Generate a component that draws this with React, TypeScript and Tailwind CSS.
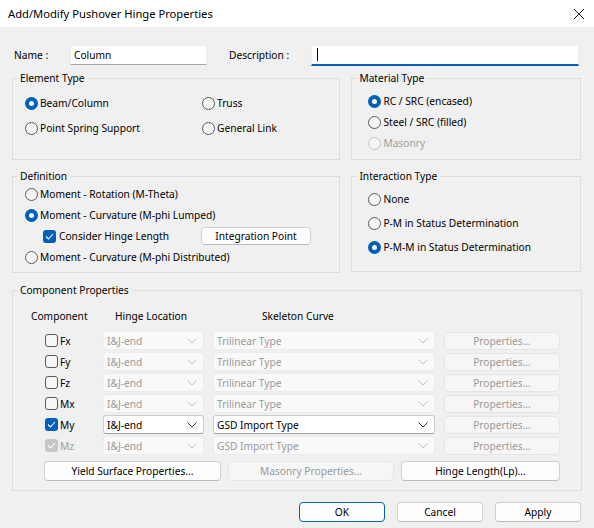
import React from "react";

const FONT = { fontFamily: '"Noto Sans", "Liberation Sans", sans-serif' };

function Radio({ label, checked, disabled }: { label: string; checked?: boolean; disabled?: boolean }) {
  return (
    <div className="flex items-center h-[16px] gap-[2px]">
      {checked ? (
        <span className="w-[13px] h-[13px] rounded-full bg-[#005fb8] flex items-center justify-center shrink-0">
          <span className="w-[5px] h-[5px] rounded-full bg-white" />
        </span>
      ) : (
        <span
          className={
            "w-[13px] h-[13px] rounded-full border shrink-0 " +
            (disabled ? "border-[#c6c6c6] bg-[#f5f5f5]" : "border-[#5a5a5a] bg-[#f6f6f6]")
          }
        />
      )}
      <span className={disabled ? "text-[#a0a0a0]" : "text-black"}>{label}</span>
    </div>
  );
}

function Check({ checked, disabled }: { checked?: boolean; disabled?: boolean }) {
  if (checked) {
    return (
      <span
        className={
          "w-[13px] h-[13px] rounded-[3px] flex items-center justify-center shrink-0 " +
          (disabled ? "bg-[#c6c6c6]" : "bg-[#005fb8]")
        }
      >
        <svg width="9" height="7" viewBox="0 0 9 7" fill="none">
          <polyline points="1,3.5 3.5,6 8,1" stroke="white" strokeWidth="1.1" />
        </svg>
      </span>
    );
  }
  return <span className="w-[13px] h-[13px] rounded-[3px] border border-[#5a5a5a] bg-[#f6f6f6] shrink-0" />;
}

function Chevron({ disabled }: { disabled?: boolean }) {
  return (
    <svg width="10" height="6" viewBox="0 0 10 6" fill="none" className="shrink-0">
      <polyline points="0.5,0.5 5,5 9.5,0.5" stroke={disabled ? "#c0c0c0" : "#333"} strokeWidth="1" />
    </svg>
  );
}

function Select({ value, w, disabled }: { value: string; w: string; disabled?: boolean }) {
  return (
    <div
      className={
        "h-[19px] flex items-center justify-between pl-[3px] pr-[6px] rounded-[3px] border shrink-0 " +
        w +
        (disabled
          ? " bg-[#f9f9f9] border-[#ececec] text-[#9a9a9a]"
          : " bg-white border-[#cccccc] border-b-[#a0a0a0] text-black")
      }
    >
      <span>{value}</span>
      <Chevron disabled={disabled} />
    </div>
  );
}

function Btn({
  label,
  w,
  h,
  disabled,
  primary,
}: {
  label: string;
  w: string;
  h: string;
  disabled?: boolean;
  primary?: boolean;
}) {
  return (
    <div
      className={
        "flex items-center justify-center rounded-[4px] border shrink-0 " +
        w +
        " " +
        h +
        (disabled
          ? " bg-[#f6f6f6] border-[#e5e5e5] text-[#9a9a9a]"
          : primary
          ? " bg-[#fdfdfd] border-[#005fb8] text-black"
          : " bg-[#fdfdfd] border-[#d0d0d0] border-b-[#bcbcbc] text-black")
      }
    >
      {label}
    </div>
  );
}

function Group({ title, className, children }: { title: string; className: string; children: React.ReactNode }) {
  return (
    <div className={"relative border border-[#dcdcdc] " + className}>
      <span className="absolute left-[4px] top-[-9px] px-[3px] bg-[#f0f0f0] leading-[16px]">{title}</span>
      {children}
    </div>
  );
}

const rows = [
  { c: "Fx", loc: "I&J-end", curve: "Trilinear Type", checked: false, enabled: false },
  { c: "Fy", loc: "I&J-end", curve: "Trilinear Type", checked: false, enabled: false },
  { c: "Fz", loc: "I&J-end", curve: "Trilinear Type", checked: false, enabled: false },
  { c: "Mx", loc: "I&J-end", curve: "Trilinear Type", checked: false, enabled: false },
  { c: "My", loc: "I&J-end", curve: "GSD Import Type", checked: true, enabled: true },
  { c: "Mz", loc: "I&J-end", curve: "GSD Import Type", checked: true, enabled: false, disabledCheck: true },
];

export default function App() {
  return (
    <div className="w-[594px] h-[528px] bg-[#f0f0f0] flex flex-col text-[10.2px] text-black leading-[16px]" style={FONT}>
      {/* Title bar */}
      <div className="h-[27px] bg-white flex items-center justify-between pl-[8px] pr-[9px] shrink-0">
        <span className="text-[11.2px]">Add/Modify Pushover Hinge Properties</span>
        <svg width="12" height="12" viewBox="0 0 12 12" fill="none">
          <line x1="1" y1="1" x2="11" y2="11" stroke="#1a1a1a" strokeWidth="1" />
          <line x1="11" y1="1" x2="1" y2="11" stroke="#1a1a1a" strokeWidth="1" />
        </svg>
      </div>

      <div className="flex flex-col pl-[12px] pr-[13px]">
        {/* Name row */}
        <div className="flex items-center h-[20px] mt-[18px]">
          <span className="ml-[2px] w-[56px]">Name :</span>
          <div className="w-[137px] h-[20px] bg-white border border-[#ececec] border-b-[#a8a8a8] flex items-center pl-[3px]">
            Column
          </div>
          <span className="ml-[22px] w-[82px]">Description :</span>
          <div className="w-[268px] h-[21px] bg-white border border-[#ececec] border-b-2 border-b-[#005fb8] flex items-center pl-[5px]">
            <span className="w-[1px] h-[13px] bg-black" />
          </div>
        </div>

        {/* Row 1 */}
        <div className="flex gap-[11px] mt-[13px]">
          <Group title="Element Type" className="w-[329px] h-[82px] pt-[16px] pl-[12px]">
            <div className="grid grid-cols-[177px_1fr] gap-y-[9px]">
              <Radio label="Beam/Column" checked />
              <Radio label="Truss" />
              <Radio label="Point Spring Support" />
              <Radio label="General Link" />
            </div>
          </Group>
          <Group title="Material Type" className="w-[230px] h-[82px] pt-[14px] pl-[16px]">
            <div className="flex flex-col gap-[5px]">
              <Radio label="RC / SRC (encased)" checked />
              <Radio label="Steel / SRC (filled)" />
              <Radio label="Masonry" disabled />
            </div>
          </Group>
        </div>

        {/* Row 2 */}
        <div className="flex gap-[11px] mt-[16px]">
          <Group title="Definition" className="w-[329px] h-[97px] pt-[9px] pl-[12px]">
            <div className="flex flex-col gap-[5px]">
              <Radio label="Moment - Rotation (M-Theta)" />
              <Radio label="Moment - Curvature (M-phi Lumped)" checked />
              <div className="flex items-center h-[16px] pl-[18px]">
                <Check checked />
                <span className="ml-[3px] w-[142px]">Consider Hinge Length</span>
                <Btn label="Integration Point" w="w-[110px]" h="h-[18px]" />
              </div>
              <Radio label="Moment - Curvature (M-phi Distributed)" />
            </div>
          </Group>
          <Group title="Interaction Type" className="w-[230px] h-[96px] pt-[14px] pl-[16px]">
            <div className="flex flex-col gap-[8px]">
              <Radio label="None" />
              <Radio label="P-M in Status Determination" />
              <Radio label="P-M-M in Status Determination" checked />
            </div>
          </Group>
        </div>

        {/* Component Properties */}
        <Group title="Component Properties" className="w-[570px] h-[201px] mt-[17px] pt-[17px]">
          <div className="flex h-[16px] items-center">
            <span className="ml-[18px] w-[84px]">Component</span>
            <span className="w-[147px]">Hinge Location</span>
            <span>Skeleton Curve</span>
          </div>
          <div className="flex flex-col gap-[2px] mt-[7px]">
            {rows.map((r) => (
              <div key={r.c} className="flex items-center h-[19px] pl-[32px]">
                <div className="flex items-center w-[58px] gap-[2px]">
                  <Check checked={r.checked} disabled={r.disabledCheck} />
                  <span className={r.disabledCheck ? "text-[#a0a0a0]" : "text-black"}>{r.c}</span>
                </div>
                <Select value={r.loc} w="w-[101px]" disabled={!r.enabled} />
                <div className="w-[9px]" />
                <Select value={r.curve} w="w-[222px]" disabled={!r.enabled} />
                <div className="w-[9px]" />
                <Btn label="Properties..." w="w-[116px]" h="h-[18px]" disabled />
              </div>
            ))}
          </div>
          <div className="flex gap-[7px] mt-[6px] pl-[31px]">
            <Btn label="Yield Surface Properties..." w="w-[177px]" h="h-[20px]" />
            <Btn label="Masonry Properties..." w="w-[166px]" h="h-[20px]" disabled />
            <Btn label="Hinge Length(Lp)..." w="w-[159px]" h="h-[20px]" />
          </div>
        </Group>

        {/* Footer */}
        <div className="flex justify-end gap-[12px] mt-[11px]">
          <Btn label="OK" w="w-[86px]" h="h-[20px]" primary />
          <Btn label="Cancel" w="w-[86px]" h="h-[20px]" />
          <Btn label="Apply" w="w-[86px]" h="h-[20px]" />
        </div>
      </div>
    </div>
  );
}
